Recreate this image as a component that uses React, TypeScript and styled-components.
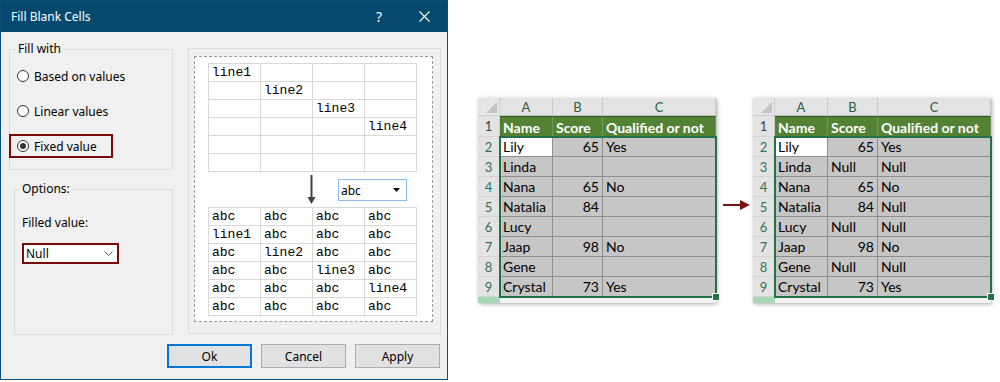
import { Fragment } from 'react';
import styled, { createGlobalStyle } from 'styled-components';

const GlobalStyle = createGlobalStyle`
  html, body {
    margin: 0;
    padding: 0;
    background: #ffffff;
  }
  body {
    font-family: "Noto Sans", "Liberation Sans", sans-serif;
    font-size: 12px;
    color: #000;
  }
`;

const Page = styled.div`
  display: flex;
  align-items: flex-start;
  width: 1000px;
  height: 382px;
  overflow: hidden;
`;

/* ---------- dialog ---------- */

const Dialog = styled.div`
  box-sizing: border-box;
  width: 448px;
  height: 380px;
  border: 1px solid #0b4f77;
  background: #f0f0f0;
  display: flex;
  flex-direction: column;
`;

const TitleBar = styled.div`
  height: 31px;
  flex-shrink: 0;
  background: #05496f;
  color: #fff;
  display: flex;
  align-items: center;
  justify-content: space-between;
  padding: 0 8px 0 10px;
`;

const TitleText = styled.span`
  font-size: 12px;
`;

const TitleButtons = styled.div`
  display: flex;
  gap: 15px;
`;

const TitleButton = styled.span`
  width: 30px;
  height: 31px;
  display: flex;
  align-items: center;
  justify-content: center;
  font-size: 14px;
`;

const Body = styled.div`
  flex: 1;
  display: flex;
  flex-direction: column;
  padding: 9px 5px 0 8px;
`;

const Main = styled.div`
  display: flex;
  gap: 15px;
`;

const LeftCol = styled.div`
  display: flex;
  flex-direction: column;
  gap: 11px;
  width: 164px;
`;

const Group = styled.fieldset<{ $height: number; $indent?: number }>`
  box-sizing: border-box;
  margin: 0 0 0 ${(p) => p.$indent ?? 0}px;
  padding: 0;
  min-width: 0;
  height: ${(p) => p.$height}px;
  border: 1px solid #dcdcdc;
`;

const Legend = styled.legend<{ $offset: number }>`
  margin-left: ${(p) => p.$offset}px;
  padding: 0 2px;
  line-height: 16px;
`;

const RadioList = styled.div`
  display: flex;
  flex-direction: column;
  gap: 11px;
  margin-top: 7px;
`;

const RadioRow = styled.div<{ $focused?: boolean }>`
  box-sizing: border-box;
  display: flex;
  align-items: center;
  gap: 5px;
  width: 104px;
  height: 24px;
  margin-left: -1px;
  padding-left: 6px;
  white-space: nowrap;
  border: 2px solid ${(p) => (p.$focused ? '#780a0a' : 'transparent')};
`;

const RadioCircle = styled.span<{ $checked?: boolean }>`
  box-sizing: border-box;
  flex-shrink: 0;
  width: 12px;
  height: 12px;
  border-radius: 50%;
  border: 1px solid #333;
  background: #fff;
  display: flex;
  align-items: center;
  justify-content: center;

  &::after {
    content: '';
    width: 6px;
    height: 6px;
    border-radius: 50%;
    background: ${(p) => (p.$checked ? '#333' : 'transparent')};
  }
`;

const FieldLabel = styled.div`
  margin: 18px 0 0 7px;
  line-height: 16px;
`;

const ValueCombo = styled.div`
  box-sizing: border-box;
  display: flex;
  align-items: center;
  justify-content: space-between;
  width: 97px;
  height: 21px;
  margin: 12px 0 0 7px;
  padding: 0 4px 0 2px;
  border: 2px solid #780a0a;
  background: #fff;
`;

const PreviewPanel = styled.div`
  box-sizing: border-box;
  width: 253px;
  height: 286px;
  margin-top: 7px;
  padding: 7px 0 0 5px;
  border: 1px solid #dcdcdc;
`;

const DashedBox = styled.div`
  box-sizing: border-box;
  width: 239px;
  height: 266px;
  padding: 6px 0 0 13px;
  border: 1px dashed #9a9a9a;
  background: #fff;
  display: flex;
  flex-direction: column;
`;

const PreviewGrid = styled.div`
  display: grid;
  grid-template-columns: repeat(4, 51px);
  grid-auto-rows: 17px;
  gap: 1px;
  padding: 1px;
  width: max-content;
  background: #d9d9d9;
`;

const PreviewCell = styled.div`
  background: #fff;
  padding-left: 3px;
  font-family: "Liberation Mono", "DejaVu Sans Mono", monospace;
  font-size: 13px;
  line-height: 18px;
  white-space: nowrap;
`;

const Middle = styled.div`
  display: flex;
  align-items: flex-start;
  height: 35px;
  padding-left: 99px;
`;

const PreviewCombo = styled.div`
  box-sizing: border-box;
  display: flex;
  align-items: center;
  justify-content: space-between;
  width: 69px;
  height: 22px;
  margin: 7px 0 0 22px;
  padding: 0 6px 0 2px;
  border: 1px solid #8cbce8;
  background: #fff;
`;

const ButtonRow = styled.div`
  display: flex;
  justify-content: flex-end;
  gap: 9px;
  margin-top: 9px;
  padding-right: 2px;
`;

const Button = styled.div<{ $default?: boolean }>`
  box-sizing: border-box;
  width: 85px;
  height: 24px;
  display: flex;
  align-items: center;
  justify-content: center;
  background: #e1e1e1;
  border: ${(p) => (p.$default ? '2px solid #0078d7' : '1px solid #adadad')};
`;

/* ---------- spreadsheets ---------- */

const Sheets = styled.div`
  display: flex;
  align-items: flex-start;
  margin: 98px 0 0 30px;
`;

const SheetFrame = styled.div`
  position: relative;
  display: grid;
  grid-template-columns: 22px 53px 50px 113px;
  grid-template-rows: 18px 21px repeat(8, 20px) 6px;
  background: #f4f4f4;
  box-shadow: 1px 1px 4px rgba(0, 0, 0, 0.35);
  font-family: Lato, "Liberation Sans", sans-serif;
  font-size: 14px;
`;

const Corner = styled.div`
  position: relative;
  box-sizing: border-box;
  background: #e6e6e6;
  border-right: 1px solid #cfcfcf;
  border-bottom: 1px solid #cfcfcf;

  &::after {
    content: '';
    position: absolute;
    right: 2px;
    bottom: 2px;
    width: 11px;
    height: 11px;
    background: #c4c4c4;
    clip-path: polygon(100% 0, 100% 100%, 0 100%);
  }
`;

const ColHead = styled.div`
  box-sizing: border-box;
  display: flex;
  align-items: center;
  justify-content: center;
  background: #e3e3e3;
  border-right: 1px solid #cbcbcb;
  border-bottom: 1px solid #c4c4c4;
  color: #2e5e44;
  font-size: 13px;
`;

const RowHead = styled.div<{ $selected?: boolean }>`
  box-sizing: border-box;
  display: flex;
  align-items: center;
  justify-content: center;
  background: #e3e3e3;
  border-right: 1px solid #cbcbcb;
  border-bottom: 1px solid #d4d4d4;
  color: ${(p) => (p.$selected ? '#2f7350' : '#444')};
  font-size: 13px;
`;

const HeadCell = styled.div`
  box-sizing: border-box;
  display: flex;
  align-items: center;
  padding: 0 3px;
  background: #548235;
  border-top: 1px solid #2f5b22;
  border-right: 1px solid #6f9858;
  color: #fff;
  font-weight: 700;
  white-space: nowrap;
`;

const DataCell = styled.div<{ $active?: boolean; $right?: boolean }>`
  box-sizing: border-box;
  display: flex;
  align-items: center;
  justify-content: ${(p) => (p.$right ? 'flex-end' : 'flex-start')};
  padding: 0 3px;
  background: ${(p) => (p.$active ? '#ffffff' : '#c6c6c6')};
  border-right: 1px solid #8e8e8e;
  border-bottom: 1px solid #8e8e8e;
  color: #000;
  white-space: nowrap;
`;

const FooterHead = styled.div`
  background: #a6d7b7;
`;

const FooterRest = styled.div`
  grid-column: span 3;
  background: #f4f4f4;
`;

const Selection = styled.div`
  position: absolute;
  left: 21px;
  top: 38px;
  width: 218px;
  height: 162px;
  box-sizing: border-box;
  border: 2px solid #217346;
  pointer-events: none;
`;

const Handle = styled.span`
  position: absolute;
  right: -5px;
  bottom: -5px;
  width: 6px;
  height: 6px;
  background: #217346;
  border: 1px solid #fff;
`;

const SheetArrow = styled.svg`
  margin: 102px 3px 0 7px;
  flex-shrink: 0;
`;

type Row = [string, string, string];

const beforeRows: Row[] = [
  ['Lily', '65', 'Yes'],
  ['Linda', '', ''],
  ['Nana', '65', 'No'],
  ['Natalia', '84', ''],
  ['Lucy', '', ''],
  ['Jaap', '98', 'No'],
  ['Gene', '', ''],
  ['Crystal', '73', 'Yes'],
];

const afterRows: Row[] = beforeRows.map(
  (r) => [r[0], r[1] || 'Null', r[2] || 'Null'] as Row,
);

const isNumber = (v: string) => /^\d+$/.test(v);

function Sheet({ rows }: { rows: Row[] }) {
  return (
    <SheetFrame>
      <Corner />
      {['A', 'B', 'C'].map((c) => (
        <ColHead key={c}>{c}</ColHead>
      ))}
      <RowHead>1</RowHead>
      <HeadCell>Name</HeadCell>
      <HeadCell>Score</HeadCell>
      <HeadCell>Qualified or not</HeadCell>
      {rows.map((r, i) => (
        <Fragment key={i}>
          <RowHead $selected>{i + 2}</RowHead>
          <DataCell $active={i === 0}>{r[0]}</DataCell>
          <DataCell $right={isNumber(r[1])}>{r[1]}</DataCell>
          <DataCell>{r[2]}</DataCell>
        </Fragment>
      ))}
      <FooterHead />
      <FooterRest />
      <Selection>
        <Handle />
      </Selection>
    </SheetFrame>
  );
}

/* ---------- preview data ---------- */

const topGrid = [
  ['line1', '', '', ''],
  ['', 'line2', '', ''],
  ['', '', 'line3', ''],
  ['', '', '', 'line4'],
  ['', '', '', ''],
  ['', '', '', ''],
];

const bottomGrid = [
  ['abc', 'abc', 'abc', 'abc'],
  ['line1', 'abc', 'abc', 'abc'],
  ['abc', 'line2', 'abc', 'abc'],
  ['abc', 'abc', 'line3', 'abc'],
  ['abc', 'abc', 'abc', 'line4'],
  ['abc', 'abc', 'abc', 'abc'],
];

function Grid({ cells }: { cells: string[][] }) {
  return (
    <PreviewGrid>
      {cells.flat().map((c, i) => (
        <PreviewCell key={i}>{c}</PreviewCell>
      ))}
    </PreviewGrid>
  );
}

const radios = [
  { label: 'Based on values', checked: false },
  { label: 'Linear values', checked: false },
  { label: 'Fixed value', checked: true },
];

export default function App() {
  return (
    <>
      <GlobalStyle />
      <Page>
        <Dialog>
          <TitleBar>
            <TitleText>Fill Blank Cells</TitleText>
            <TitleButtons>
              <TitleButton>?</TitleButton>
              <TitleButton>
                <svg width="11" height="11" viewBox="0 0 11 11">
                  <path d="M0.5 0.5 L10.5 10.5 M10.5 0.5 L0.5 10.5" stroke="#fff" strokeWidth="1.1" />
                </svg>
              </TitleButton>
            </TitleButtons>
          </TitleBar>

          <Body>
            <Main>
              <LeftCol>
                <Group $height={129}>
                  <Legend $offset={6}>Fill with</Legend>
                  <RadioList>
                    {radios.map((r) => (
                      <RadioRow key={r.label} $focused={r.checked}>
                        <RadioCircle $checked={r.checked} />
                        {r.label}
                      </RadioRow>
                    ))}
                  </RadioList>
                </Group>
                <Group $height={154} $indent={5}>
                  <Legend $offset={5}>Options:</Legend>
                  <FieldLabel>Filled value:</FieldLabel>
                  <ValueCombo>
                    Null
                    <svg width="9" height="5" viewBox="0 0 9 5">
                      <path d="M0.5 0.5 L4.5 4.5 L8.5 0.5" fill="none" stroke="#555" strokeWidth="1" />
                    </svg>
                  </ValueCombo>
                </Group>
              </LeftCol>

              <PreviewPanel>
                <DashedBox>
                  <Grid cells={topGrid} />
                  <Middle>
                    <svg width="9" height="29" viewBox="0 0 9 29" style={{ marginTop: 3 }}>
                      <rect x="3.5" y="0" width="2" height="23" fill="#404040" />
                      <path d="M0.5 22 L8.5 22 L4.5 29 Z" fill="#404040" />
                    </svg>
                    <PreviewCombo>
                      abc
                      <svg width="7" height="4" viewBox="0 0 7 4">
                        <path d="M0 0 L7 0 L3.5 4 Z" fill="#111" />
                      </svg>
                    </PreviewCombo>
                  </Middle>
                  <Grid cells={bottomGrid} />
                </DashedBox>
              </PreviewPanel>
            </Main>

            <ButtonRow>
              <Button $default>Ok</Button>
              <Button>Cancel</Button>
              <Button>Apply</Button>
            </ButtonRow>
          </Body>
        </Dialog>

        <Sheets>
          <Sheet rows={beforeRows} />
          <SheetArrow width="27" height="10" viewBox="0 0 27 10">
            <rect x="0" y="4" width="19" height="2" fill="#7b1111" />
            <path d="M17 0 L27 5 L17 10 Z" fill="#7b1111" />
          </SheetArrow>
          <Sheet rows={afterRows} />
        </Sheets>
      </Page>
    </>
  );
}
